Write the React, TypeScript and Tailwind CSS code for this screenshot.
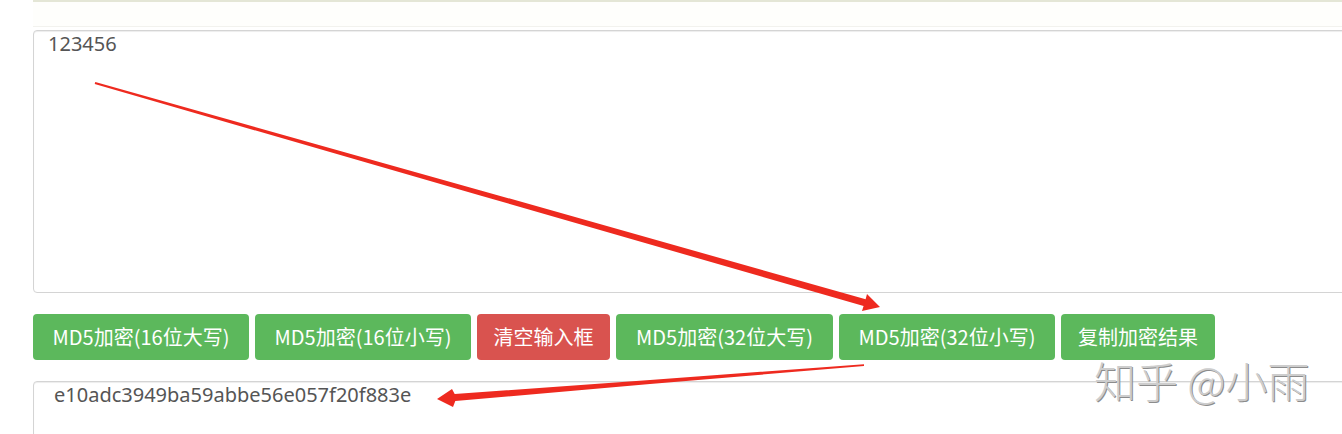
import React from "react";

const green = "bg-[#5cb85c]";

function Btn({ w, red, children }: { w: string; red?: boolean; children: React.ReactNode }) {
  return (
    <div
      className={`${w} h-[46px] shrink-0 rounded-[4px] ${red ? "bg-[#d9534f]" : green} flex items-center justify-center text-white text-[20px] leading-[26px] whitespace-nowrap`}
    >
      {children}
    </div>
  );
}

export default function App() {
  return (
    <div
      className="relative w-[1342px] h-[434px] overflow-hidden bg-white"
      style={{ fontFamily: '"Noto Sans", "Noto Sans CJK SC", sans-serif' }}
    >
      <div className="ml-[33px] w-[1400px] h-[27px] border-t-2 border-[#e4e6d6] border-b border-b-[#f2f2ee] bg-[#fefefc]" />
      <div className="ml-[33px] mt-[3px] w-[1400px] h-[263px] border border-[#d4d4d4] rounded-[4px] shadow-[inset_0_1px_1px_rgba(0,0,0,0.075)] pl-[14px] pt-[1px] text-[20px] leading-[24px] text-[#555]">
        123456
      </div>
      <div
        className="ml-[33px] mt-[21px] flex gap-[6px]"
        style={{ fontFamily: '"Noto Sans CJK SC", sans-serif' }}
      >
        <Btn w="w-[216px]">MD5加密(16位大写)</Btn>
        <Btn w="w-[216px]">MD5加密(16位小写)</Btn>
        <Btn w="w-[133px]" red>
          清空输入框
        </Btn>
        <Btn w="w-[217px]">MD5加密(32位大写)</Btn>
        <Btn w="w-[216px]">MD5加密(32位小写)</Btn>
        <Btn w="w-[154px]">复制加密结果</Btn>
      </div>
      <div className="ml-[33px] mt-[21px] w-[1400px] h-[120px] border border-[#d4d4d4] rounded-[4px] shadow-[inset_0_1px_1px_rgba(0,0,0,0.075)] pl-[20px] pt-[1px] text-[20px] leading-[24px] text-[#555]">
        e10adc3949ba59abbe56e057f20f883e
      </div>

      <svg
        className="absolute left-0 top-0 pointer-events-none"
        width="1342"
        height="434"
        viewBox="0 0 1342 434"
      >
        <polygon
          fill="#ee2a1f"
          points="95.3,82 480.7,190.4 865.6,299.2 867,294 880,307 862,311 863.6,306 479.3,195.2 94.7,84"
        />
        <polygon
          fill="#ee2a1f"
          points="864,364.2 650,380 454.7,394.1 452,389 437,399 453,407 455.3,401.1 650,384 864,366"
        />
      </svg>

      <div
        className="absolute left-[1094px] top-[359px] text-[42px] leading-[42px] text-[#cdcdcd] whitespace-nowrap [text-shadow:1px_1px_0_#8c8c8c]"
        style={{ fontFamily: '"Noto Sans CJK SC", sans-serif', fontWeight: 300 }}
      >
        知乎 @小雨
      </div>
    </div>
  );
}
